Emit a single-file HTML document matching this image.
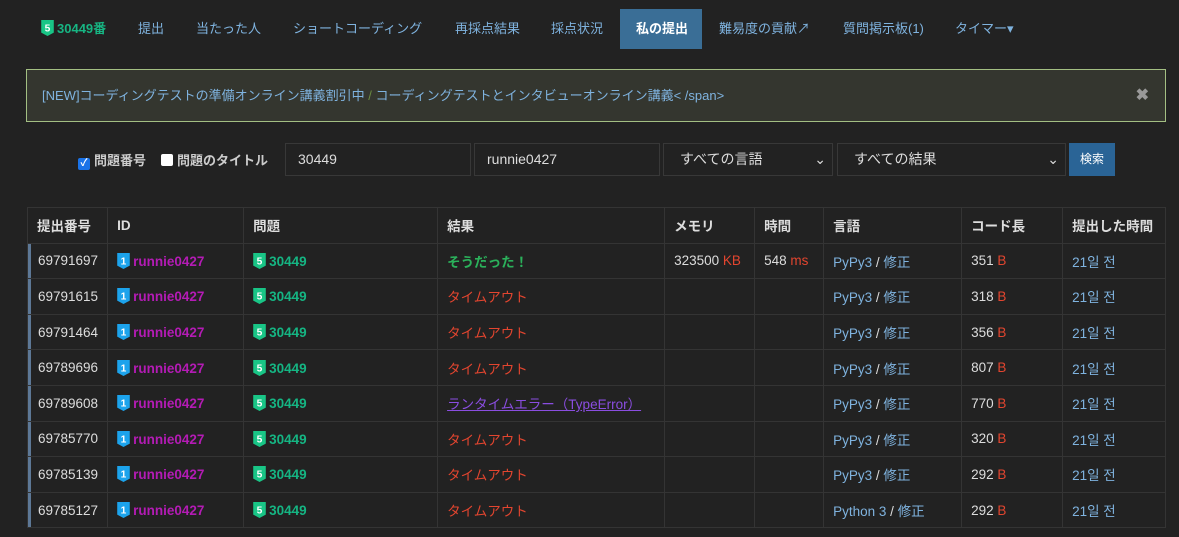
<!DOCTYPE html>
<html><head><meta charset="utf-8"><style>
*{box-sizing:border-box;margin:0;padding:0}
body{width:1179px;height:537px;background:#222;color:#ddd;font-family:"Liberation Sans","Noto Sans CJK JP",sans-serif;font-size:13px;position:relative;overflow:hidden}
.nav a{position:absolute;top:9px;height:40px;line-height:40px;color:#7fb3df;text-decoration:none;font-size:13px;white-space:nowrap}
.act{background:#3a6e96;color:#fff!important;font-weight:bold;padding:0 16px}
.badge{display:inline-block;width:13px;height:16px;vertical-align:-3px;margin-right:3px}
.alert{position:absolute;left:26px;top:69px;width:1140px;height:53px;background:#34362f;border:1px solid #a3bf83;line-height:51px;padding-left:15px;color:#7fb3df}
.x{position:absolute;right:16px;top:0;color:#999;font-weight:bold;font-size:16px}
.inp{position:absolute;top:143px;height:33px;background:#222;border:1px solid #383838;line-height:31px;padding-left:12px;color:#ddd;font-size:14px}
.chk{position:absolute;top:150px;font-weight:bold;color:#ccc;font-size:13px}
.cb{display:inline-block;width:12px;height:12px;vertical-align:-1px;margin-right:4px;border-radius:2px;color:#fff;font-size:10px;line-height:12px;text-align:center}
table{position:absolute;left:27px;top:207px;border-collapse:collapse;width:1139px}
td,th{border:1px solid #343434;height:35.6px;padding:0 9px;text-align:left;white-space:nowrap;font-size:13.5px}
th{font-weight:bold;color:#ddd}
td:first-child{box-shadow:inset 3px 0 #5d7896;padding-left:10px}
.u{color:#b41bb5;font-weight:bold}.p{color:#15b583;font-weight:bold}
.ok{color:#2bb15b;font-weight:bold}.to{color:#e3452f}.re{color:#8a4de0;text-decoration:underline}
.r{color:#e3452f}.b{color:#7fb3df}
</style></head><body>
<div class="nav">
<a style="left:41px;color:#17b583;font-weight:bold"><svg class="badge" viewBox="0 0 11 14"><path d="M0 0H11V11L5.5 14L0 11Z" fill="#19c586"/><text x="5.5" y="10" font-size="9" fill="#fff" text-anchor="middle" font-weight="bold" font-family="Liberation Sans">5</text></svg>30449番</a>
<a style="left:138px">提出</a>
<a style="left:196px">当たった人</a>
<a style="left:293px">ショートコーディング</a>
<a style="left:455px">再採点結果</a>
<a style="left:551px">採点状況</a>
<a class="act" style="left:620px;width:82px">私の提出</a>
<a style="left:719px">難易度の貢献↗</a>
<a style="left:843px">質問掲示板(1)</a>
<a style="left:955px">タイマー▾</a>
</div>
<div class="alert">[NEW]コーディングテストの準備オンライン講義割引中 <span style="color:#6a8a40">/</span> コーディングテストとインタビューオンライン講義&lt; /span&gt;<span class="x">✖</span></div>
<div class="chk" style="left:78px"><span class="cb" style="background:#1a73e8">✓</span>問題番号</div>
<div class="chk" style="left:161px"><span class="cb" style="background:#fff"></span>問題のタイトル</div>
<div class="inp" style="left:285px;width:186px">30449</div>
<div class="inp" style="left:474px;width:186px">runnie0427</div>
<div class="inp" style="left:663px;width:170px;padding-left:16px">すべての言語<span style="position:absolute;right:6px">⌄</span></div>
<div class="inp" style="left:837px;width:229px;padding-left:16px">すべての結果<span style="position:absolute;right:6px">⌄</span></div>
<div class="inp" style="left:1069px;width:46px;background:#2a6496;border-color:#2a6496;color:#fff;padding-left:10px;font-size:12px">検索</div>
<table>
<tr><th style="width:80px">提出番号</th><th style="width:136px">ID</th><th style="width:194px">問題</th><th style="width:227px">結果</th><th style="width:90px">メモリ</th><th style="width:69px">時間</th><th style="width:138px">言語</th><th style="width:101px">コード長</th><th>提出した時間</th></tr>
<tr><td>69791697</td><td class="u">runnie0427</td><td class="p">30449</td><td class="ok">そうだった！</td><td>323500 <span class="r">KB</span></td><td>548 <span class="r">ms</span></td><td class="b">PyPy3 <span style="color:#ddd">/</span> 修正</td><td>351 <span class="r">B</span></td><td class="b">21일 전</td></tr>
<tr><td>69791615</td><td class="u">runnie0427</td><td class="p">30449</td><td class="to">タイムアウト</td><td></td><td></td><td class="b">PyPy3 <span style="color:#ddd">/</span> 修正</td><td>318 <span class="r">B</span></td><td class="b">21일 전</td></tr>
<tr><td>69791464</td><td class="u">runnie0427</td><td class="p">30449</td><td class="to">タイムアウト</td><td></td><td></td><td class="b">PyPy3 <span style="color:#ddd">/</span> 修正</td><td>356 <span class="r">B</span></td><td class="b">21일 전</td></tr>
<tr><td>69789696</td><td class="u">runnie0427</td><td class="p">30449</td><td class="to">タイムアウト</td><td></td><td></td><td class="b">PyPy3 <span style="color:#ddd">/</span> 修正</td><td>807 <span class="r">B</span></td><td class="b">21일 전</td></tr>
<tr><td>69789608</td><td class="u">runnie0427</td><td class="p">30449</td><td class="re">ランタイムエラー（TypeError）</td><td></td><td></td><td class="b">PyPy3 <span style="color:#ddd">/</span> 修正</td><td>770 <span class="r">B</span></td><td class="b">21일 전</td></tr>
<tr><td>69785770</td><td class="u">runnie0427</td><td class="p">30449</td><td class="to">タイムアウト</td><td></td><td></td><td class="b">PyPy3 <span style="color:#ddd">/</span> 修正</td><td>320 <span class="r">B</span></td><td class="b">21일 전</td></tr>
<tr><td>69785139</td><td class="u">runnie0427</td><td class="p">30449</td><td class="to">タイムアウト</td><td></td><td></td><td class="b">PyPy3 <span style="color:#ddd">/</span> 修正</td><td>292 <span class="r">B</span></td><td class="b">21일 전</td></tr>
<tr><td>69785127</td><td class="u">runnie0427</td><td class="p">30449</td><td class="to">タイムアウト</td><td></td><td></td><td class="b">Python 3 <span style="color:#ddd">/</span> 修正</td><td>292 <span class="r">B</span></td><td class="b">21일 전</td></tr>
</table>
<script>
document.querySelectorAll('td.u').forEach(t=>{t.innerHTML='<svg class="badge" viewBox="0 0 11 14"><path d="M0 0H11V11L5.5 14L0 11Z" fill="#1ca3ec"/><text x="5.5" y="10" font-size="9" fill="#fff" text-anchor="middle" font-weight="bold" font-family="Liberation Sans">1</text></svg>runnie0427'});
document.querySelectorAll('td.p').forEach(t=>{t.innerHTML='<svg class="badge" viewBox="0 0 11 14"><path d="M0 0H11V11L5.5 14L0 11Z" fill="#19c586"/><text x="5.5" y="10" font-size="9" fill="#fff" text-anchor="middle" font-weight="bold" font-family="Liberation Sans">5</text></svg>30449'});
</script>
</body></html>
